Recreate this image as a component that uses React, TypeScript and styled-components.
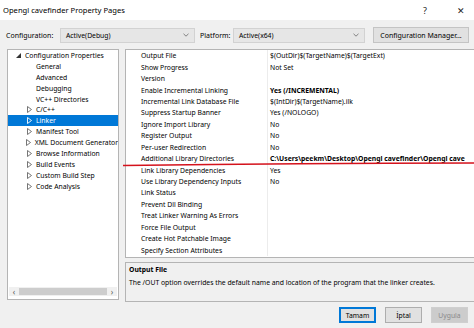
import React from 'react';
import styled, { createGlobalStyle } from 'styled-components';

const GlobalStyle = createGlobalStyle`
  html, body {
    margin: 0;
    padding: 0;
    width: 474px;
    height: 328px;
    overflow: hidden;
    background: #f0f0f0;
  }
  body {
    font-family: "Noto Sans", "Open Sans", sans-serif;
    font-size: 6.8px;
    color: #000;
  }
`;

const Dialog = styled.div`
  position: relative;
  width: 474px;
  height: 328px;
  display: flex;
  flex-direction: column;
  background: #f0f0f0;
`;

const TitleBar = styled.div`
  height: 20px;
  display: flex;
  align-items: center;
  padding: 0 0 0 3px;
  background: #ffffff;
`;

const Title = styled.div`
  flex: 1;
  font-size: 7.6px;
`;

const TitleBtn = styled.div<{ w: number }>`
  width: ${p => p.w}px;
  text-align: center;
  font-size: 9px;
  color: #222;
`;

const ConfigRow = styled.div`
  height: 22px;
  margin-top: 4px;
  display: flex;
  align-items: center;
  padding-left: 6px;
`;

const Label = styled.span<{ w: number }>`
  width: ${p => p.w}px;
  font-size: 7px;
`;

const Combo = styled.div<{ w: number }>`
  width: ${p => p.w}px;
  height: 15px;
  box-sizing: border-box;
  border: 1px solid #d2d2d2;
  background: #e6e6e6;
  display: flex;
  align-items: center;
  padding: 0 5px;
  font-size: 6.8px;
  margin-right: 5px;
`;

const ComboText = styled.span`
  flex: 1;
`;

const Chevron = styled.svg`
  width: 6px;
  height: 4px;
`;

const ManagerBtn = styled.div`
  margin-left: 3px;
  width: 96px;
  height: 16px;
  box-sizing: border-box;
  border: 1px solid #c4c4c4;
  background: #e1e1e1;
  display: flex;
  align-items: center;
  justify-content: center;
  font-size: 7px;
  white-space: nowrap;
`;

const Main = styled.div`
  margin-top: 3px;
  display: flex;
  gap: 6px;
  padding-left: 7px;
`;

const TreePanel = styled.div`
  width: 112px;
  height: 251px;
  box-sizing: border-box;
  border: 1px solid #b4b4b4;
  background: #fff;
  display: flex;
  flex-direction: column;
`;

const TreeList = styled.div`
  flex: 1;
  overflow: hidden;
`;

const TreeRow = styled.div<{ level: number; selected?: boolean }>`
  height: 10.9px;
  display: flex;
  align-items: center;
  white-space: nowrap;
  padding-left: ${p => (p.level === 0 ? 6 : 17)}px;
  background: ${p => (p.selected ? '#0078d7' : 'transparent')};
  color: ${p => (p.selected ? '#fff' : '#000')};
`;

const Arrow = styled.span<{ hidden?: boolean }>`
  width: 8px;
  display: inline-flex;
  align-items: center;
  justify-content: center;
  margin-right: 3px;
  visibility: ${p => (p.hidden ? 'hidden' : 'visible')};
`;

const HScroll = styled.div`
  height: 9px;
  margin: 0 1px 3px;
  display: flex;
  align-items: center;
  background: #f0f0f0;
`;

const ScrollArrow = styled.span`
  width: 10px;
  text-align: center;
  font-size: 8px;
  color: #555;
  line-height: 9px;
`;

const ScrollThumb = styled.div`
  flex: 1;
  height: 7px;
  background: #cdcdcd;
`;

const RightCol = styled.div`
  flex: 1;
  display: flex;
  flex-direction: column;
  gap: 4px;
`;

const GridPanel = styled.div`
  height: 209px;
  box-sizing: border-box;
  border: 1px solid #b4b4b4;
  border-right: none;
  background: #fff;
  overflow: hidden;
`;

const PropRow = styled.div`
  height: 11.45px;
  display: grid;
  grid-template-columns: 142px 1fr;
  white-space: nowrap;
`;

const PropName = styled.div`
  padding-left: 15px;
  display: flex;
  align-items: center;
  border-right: 1px solid #ececec;
`;

const PropValue = styled.div<{ bold?: boolean }>`
  padding-left: 2px;
  display: flex;
  align-items: center;
  font-weight: ${p => (p.bold ? 700 : 400)};
  overflow: hidden;
`;

const DescPanel = styled.div`
  height: 40px;
  box-sizing: border-box;
  border: 1px solid #b4b4b4;
  border-right: none;
  padding: 1px 3px;
  background: #f0f0f0;
`;

const DescTitle = styled.div`
  font-weight: 700;
  line-height: 12px;
`;

const DescText = styled.div`
  line-height: 13px;
  white-space: nowrap;
`;

const Footer = styled.div`
  display: flex;
  justify-content: flex-end;
  gap: 9px;
  padding-right: 6px;
  margin-top: 5px;
`;

const Btn = styled.div<{ kind: 'default' | 'normal' | 'disabled' }>`
  width: 37px;
  height: 16px;
  box-sizing: border-box;
  display: flex;
  align-items: center;
  justify-content: center;
  border: 1px solid
    ${p => (p.kind === 'default' ? '#0078d7' : p.kind === 'normal' ? '#adadad' : '#cfcfcf')};
  background: ${p => (p.kind === 'disabled' ? '#cccccc' : '#e1e1e1')};
  color: ${p => (p.kind === 'disabled' ? '#8a8a8a' : '#000')};
  box-shadow: ${p => (p.kind === 'default' ? 'inset 0 0 0 1px #0078d7' : 'none')};
`;

const RedMark = styled.svg`
  position: absolute;
  left: 0;
  top: 0;
  pointer-events: none;
`;

const treeItems: { label: string; level: number; kind: 'open' | 'closed' | 'leaf' }[] = [
  { label: 'Configuration Properties', level: 0, kind: 'open' },
  { label: 'General', level: 1, kind: 'leaf' },
  { label: 'Advanced', level: 1, kind: 'leaf' },
  { label: 'Debugging', level: 1, kind: 'leaf' },
  { label: 'VC++ Directories', level: 1, kind: 'leaf' },
  { label: 'C/C++', level: 1, kind: 'closed' },
  { label: 'Linker', level: 1, kind: 'closed' },
  { label: 'Manifest Tool', level: 1, kind: 'closed' },
  { label: 'XML Document Generator', level: 1, kind: 'closed' },
  { label: 'Browse Information', level: 1, kind: 'closed' },
  { label: 'Build Events', level: 1, kind: 'closed' },
  { label: 'Custom Build Step', level: 1, kind: 'closed' },
  { label: 'Code Analysis', level: 1, kind: 'closed' },
];

const props: [string, string, boolean?][] = [
  ['Output File', '$(OutDir)$(TargetName)$(TargetExt)'],
  ['Show Progress', 'Not Set'],
  ['Version', ''],
  ['Enable Incremental Linking', 'Yes (/INCREMENTAL)', true],
  ['Incremental Link Database File', '$(IntDir)$(TargetName).ilk'],
  ['Suppress Startup Banner', 'Yes (/NOLOGO)'],
  ['Ignore Import Library', 'No'],
  ['Register Output', 'No'],
  ['Per-user Redirection', 'No'],
  ['Additional Library Directories', 'C:\\Users\\peekm\\Desktop\\Opengl cavefinder\\Opengl cave', true],
  ['Link Library Dependencies', 'Yes'],
  ['Use Library Dependency Inputs', 'No'],
  ['Link Status', ''],
  ['Prevent Dll Binding', ''],
  ['Treat Linker Warning As Errors', ''],
  ['Force File Output', ''],
  ['Create Hot Patchable Image', ''],
  ['Specify Section Attributes', ''],
];

const TreeArrow = ({ kind, selected }: { kind: string; selected?: boolean }) => {
  if (kind === 'open')
    return (
      <svg width="5" height="5" viewBox="0 0 5 5">
        <path d="M5 0 L5 5 L0 5 Z" fill="#333" />
      </svg>
    );
  return (
    <svg width="5" height="7" viewBox="0 0 5 7">
      <path d="M0.5 0.5 L4.5 3.5 L0.5 6.5 Z" fill="none" stroke={selected ? '#fff' : '#666'} strokeWidth="0.9" />
    </svg>
  );
};

const ChevronIcon = () => (
  <Chevron viewBox="0 0 6 4">
    <path d="M0.5 0.8 L3 3.2 L5.5 0.8" fill="none" stroke="#666" strokeWidth="0.8" />
  </Chevron>
);

export default function App() {
  return (
    <Dialog>
      <GlobalStyle />
      <TitleBar>
        <Title>Opengl cavefinder Property Pages</Title>
        <TitleBtn w={22}>?</TitleBtn>
        <TitleBtn w={12} />
        <TitleBtn w={26}>✕</TitleBtn>
      </TitleBar>
      <ConfigRow>
        <Label w={54}>Configuration:</Label>
        <Combo w={135}>
          <ComboText>Active(Debug)</ComboText>
          <ChevronIcon />
        </Combo>
        <Label w={33}>Platform:</Label>
        <Combo w={132}>
          <ComboText>Active(x64)</ComboText>
          <ChevronIcon />
        </Combo>
        <ManagerBtn>Configuration Manager...</ManagerBtn>
      </ConfigRow>
      <Main>
        <TreePanel>
          <TreeList>
            {treeItems.map(item => (
              <TreeRow key={item.label} level={item.level} selected={item.label === 'Linker'}>
                <Arrow hidden={item.kind === 'leaf'}>
                  {item.kind !== 'leaf' && (
                    <TreeArrow kind={item.kind} selected={item.label === 'Linker'} />
                  )}
                </Arrow>
                {item.label}
              </TreeRow>
            ))}
          </TreeList>
          <HScroll>
            <ScrollArrow>‹</ScrollArrow>
            <ScrollThumb />
            <ScrollArrow>›</ScrollArrow>
          </HScroll>
        </TreePanel>
        <RightCol>
          <GridPanel>
            {props.map(([name, value, bold]) => (
              <PropRow key={name}>
                <PropName>{name}</PropName>
                <PropValue bold={bold}>{value}</PropValue>
              </PropRow>
            ))}
          </GridPanel>
          <DescPanel>
            <DescTitle>Output File</DescTitle>
            <DescText>The /OUT option overrides the default name and location of the program that the linker creates.</DescText>
          </DescPanel>
        </RightCol>
      </Main>
      <Footer>
        <Btn kind="default">Tamam</Btn>
        <Btn kind="normal">İptal</Btn>
        <Btn kind="disabled">Uygula</Btn>
      </Footer>
      <RedMark width="474" height="328">
        <path d="M123 165.5 Q300 163 474 163" fill="none" stroke="#d4121c" strokeWidth="1.6" />
      </RedMark>
    </Dialog>
  );
}
